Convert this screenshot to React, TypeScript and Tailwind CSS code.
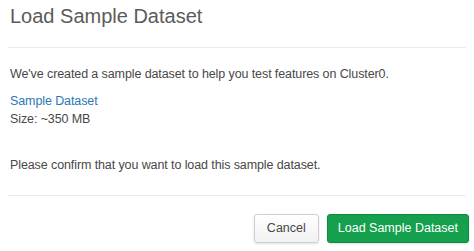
export default function App() {
  return (
    <div
      className="flex h-[251px] w-[474px] flex-col bg-white text-[#494747]"
      style={{ fontFamily: '"Liberation Sans", Arial, sans-serif' }}
    >
      {/* Header */}
      <div className="mx-[8px] flex h-[48px] items-start border-b border-[#ebebeb] px-[2px] pt-[3px]">
        <h2 className="text-[20px] leading-[26px] font-normal text-[#5b5b5b]">Load Sample Dataset</h2>
      </div>

      {/* Body */}
      <div className="mx-[8px] flex h-[148px] flex-col border-b border-[#ebebeb] px-[2px] pt-[17px] text-[12.5px] leading-[18px] tracking-[-0.1px]">
        <p>We&apos;ve created a sample dataset to help you test features on Cluster0.</p>
        <a href="#" className="mt-[9px] text-[#2a78b5]">
          Sample Dataset
        </a>
        <p>Size: ~350 MB</p>
        <p className="mt-[28px]">Please confirm that you want to load this sample dataset.</p>
      </div>

      {/* Footer */}
      <div className="flex justify-end gap-[8px] pt-[18px] pr-[5px]">
        <button
          type="button"
          className="h-[29px] rounded-[3px] border border-[#cfcfcf] bg-gradient-to-b from-white to-[#f1f1f1] px-[12px] text-[12.5px] text-[#494747] shadow-sm"
        >
          Cancel
        </button>
        <button
          type="button"
          className="h-[29px] rounded-[3px] border border-[#0f8a42] bg-[#15a04e] px-[10px] text-[12.5px] text-white shadow-sm"
        >
          Load Sample Dataset
        </button>
      </div>
    </div>
  );
}
